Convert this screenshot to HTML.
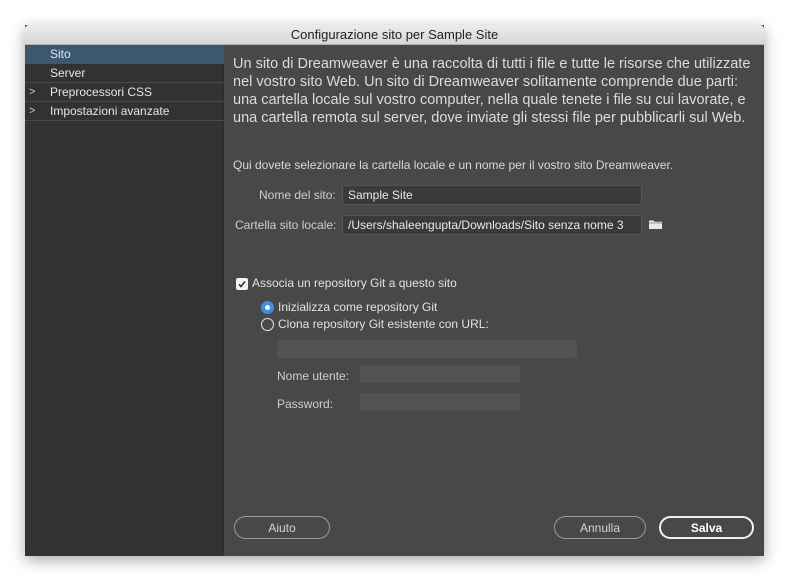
<!DOCTYPE html>
<html><head><meta charset="utf-8"><style>
*{margin:0;padding:0;box-sizing:border-box}
body{width:789px;height:581px;background:#fff;font-family:"Liberation Sans",sans-serif;position:relative;overflow:hidden}
.win{position:absolute;left:25px;top:25px;width:739px;height:531px;background:#484848;box-shadow:0 4px 14px rgba(0,0,0,.35)}
.title{position:absolute;left:0;top:0;width:739px;height:20px;background:linear-gradient(#ececec,#d6d6d6);border-bottom:1px solid #b0b0b0;text-align:center;font-size:13px;line-height:20px;color:#222;border-radius:4px 4px 0 0}
.side{position:absolute;left:0;top:20px;width:199px;height:511px;background:#323232;border-right:1px solid #2a2a2a}
.row{position:absolute;left:0;width:199px;height:19px;border-bottom:1px solid #484848;color:#e6e6e6;font-size:12px;line-height:19px;padding-left:25px}
.row.sel{background:#3c5770;border-bottom-color:#3c5770}
.row .ch{position:absolute;left:4px;top:0;color:#ccc;font-size:11px}
.t{position:absolute;color:#d8d8d8;white-space:nowrap}
.p{font-size:14.5px;line-height:18px;color:#dcdcdc;left:208px;top:30px}
.lbl{font-size:12px;color:#cfcfcf}
.inp{position:absolute;background:#3a3a3a;border:1px solid #555;border-radius:2px;color:#e8e8e8;font-size:12px;padding-left:5px;line-height:18px}
.inp2{position:absolute;background:#525252;border-radius:2px}
.btn{position:absolute;height:23px;border:1px solid #9a9a9a;border-radius:12px;color:#d4d4d4;font-size:12px;text-align:center;line-height:22px}
</style></head><body>
<div class="win">
<div class="title">Configurazione sito per Sample Site</div>
<div class="side">
<div class="row sel" style="top:0">Sito</div>
<div class="row" style="top:19px">Server</div>
<div class="row" style="top:38px"><span class="ch">&gt;</span>Preprocessori CSS</div>
<div class="row" style="top:57px"><span class="ch">&gt;</span>Impostazioni avanzate</div>
</div>
<div class="t p">Un sito di Dreamweaver è una raccolta di tutti i file e tutte le risorse che utilizzate<br>nel vostro sito Web. Un sito di Dreamweaver solitamente comprende due parti:<br>una cartella locale sul vostro computer, nella quale tenete i file su cui lavorate, e<br>una cartella remota sul server, dove inviate gli stessi file per pubblicarli sul Web.</div>
<div class="t lbl" style="left:208px;top:133px;color:#d8d8d8">Qui dovete selezionare la cartella locale e un nome per il vostro sito Dreamweaver.</div>
<div class="t lbl" style="left:234px;top:163px">Nome del sito:</div>
<div class="inp" style="left:317px;top:160px;width:300px;height:20px">Sample Site</div>
<div class="t lbl" style="left:210px;top:193px">Cartella sito locale:</div>
<div class="inp" style="left:317px;top:190px;width:300px;height:20px">/Users/shaleengupta/Downloads/Sito senza nome 3</div>
<svg style="position:absolute;left:623px;top:193px" width="15" height="12"><path d="M1 2.5h4.5l1.2 1.3H14V11H1z" fill="#e8e8e8"/><path d="M1 5h13" stroke="#999" stroke-width="1"/></svg>
<div style="position:absolute;left:211px;top:253px;width:12px;height:12px;background:#f2f2f2;border-radius:2px"></div>
<svg style="position:absolute;left:211px;top:253px" width="12" height="12"><path d="M3 6.3l2 2.2 4-5" stroke="#333" stroke-width="1.6" fill="none"/></svg>
<div class="t" style="left:227px;top:251px;font-size:12px;color:#e2e2e2">Associa un repository Git a questo sito</div>
<div style="position:absolute;left:236px;top:276px;width:13px;height:13px;border-radius:50%;background:#fff;border:4px solid #3d8ee8"></div>
<div class="t" style="left:253px;top:275px;font-size:12px;color:#e2e2e2">Inizializza come repository Git</div>
<div style="position:absolute;left:236px;top:293px;width:13px;height:13px;border-radius:50%;border:1px solid #e8e8e8"></div>
<div class="t" style="left:253px;top:292px;font-size:12px;color:#e2e2e2">Clona repository Git esistente con URL:</div>
<div class="inp2" style="left:252px;top:315px;width:300px;height:18px"></div>
<div class="t lbl" style="left:252px;top:344px">Nome utente:</div>
<div class="inp2" style="left:335px;top:340px;width:160px;height:18px"></div>
<div class="t lbl" style="left:252px;top:372px">Password:</div>
<div class="inp2" style="left:335px;top:368px;width:160px;height:18px"></div>
<div class="btn" style="left:209px;top:491px;width:96px">Aiuto</div>
<div class="btn" style="left:529px;top:491px;width:92px">Annulla</div>
<div class="btn" style="left:634px;top:491px;width:95px;border:2px solid #f0f0f0;color:#fff;font-weight:bold;line-height:20px">Salva</div>
</div>
</body></html>
